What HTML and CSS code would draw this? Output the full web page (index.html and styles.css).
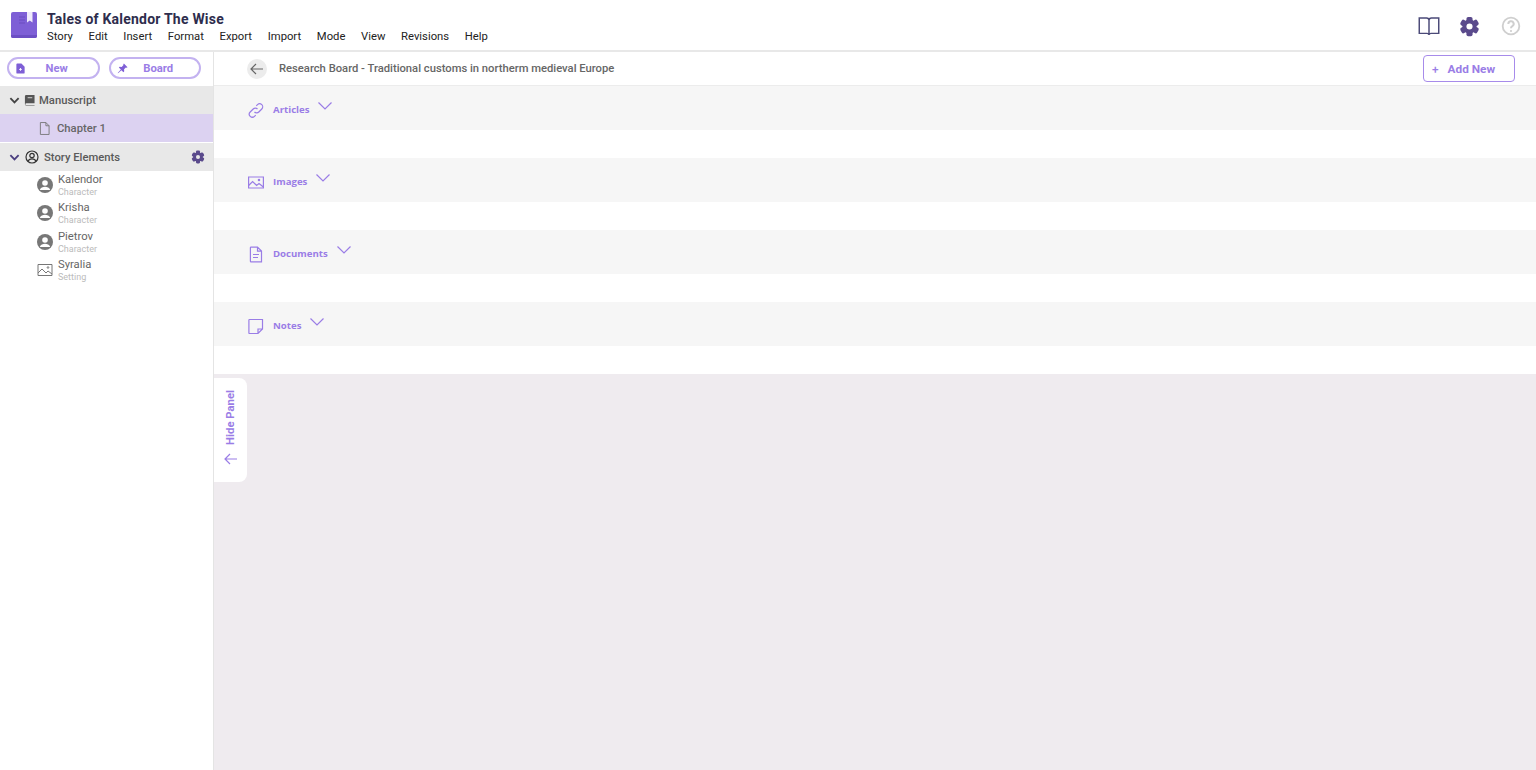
FILE: index.html
```html
<!DOCTYPE html>
<html lang="en">
<head>
<meta charset="utf-8">
<title>Tales of Kalendor The Wise</title>
<link rel="stylesheet" href="styles.css">
</head>
<body>
<header class="topbar">
  <div class="brand">
    <svg class="logo" viewBox="0 0 26 26"><path d="M2 0h22a2 2 0 0 1 2 2v22a2 2 0 0 1-2 2H2a2 2 0 0 1-2-2V2a2 2 0 0 1 2-2z" fill="#7e5fd6"/><path d="M0 23h26v1a2 2 0 0 1-2 2H2a2 2 0 0 1-2-2z" fill="#6c4fc4"/><path d="M16 0h5.500v10.500l-2.750-2-2.750 2z" fill="#efeafb"/><path d="M8 5h6M8 8h6M8 11h6" stroke="#6a4dc0" stroke-width="1"/></svg>
    <div class="brand-text">
      <div class="title">Tales of Kalendor The Wise</div>
      <nav class="menu"><span>Story</span><span>Edit</span><span>Insert</span><span>Format</span><span>Export</span><span>Import</span><span>Mode</span><span>View</span><span>Revisions</span><span>Help</span></nav>
    </div>
  </div>
  <div class="top-actions">
    <svg class="ico-book" viewBox="1 2.500 22 19.500" fill="none" stroke="#4b4a78" stroke-width="1.500"><path d="M2 3.500h7.500c1.400 0 2.500 1 2.500 2.400V21c0-1-1-1.700-2.200-1.700H2zM22 3.500h-7.500C13.100 3.500 12 4.500 12 5.900V21c0-1 1-1.700 2.200-1.700H22z"/></svg>
    <svg class="ico-gear" viewBox="0 0 24 24" fill="#5a4a8c"><circle cx="12" cy="12" r="8"/><rect x="8.500" y="1" width="7" height="22" rx="2"/><rect x="8.500" y="1" width="7" height="22" rx="2" transform="rotate(60 12 12)"/><rect x="8.500" y="1" width="7" height="22" rx="2" transform="rotate(120 12 12)"/><circle cx="12" cy="12" r="3.500" fill="#fff"/></svg>
    <svg class="ico-help" viewBox="0 0 24 24" fill="none" stroke="#cfcfcf" stroke-width="2.200"><circle cx="12" cy="12" r="10"/><path d="M8.800 9.500a3.200 3.200 0 1 1 4.800 2.700c-1 .6-1.600 1.200-1.600 2.500" stroke-width="2.400"/><circle cx="12" cy="18" r=".6" stroke-width="1.400"/></svg>
  </div>
</header>
<div class="shell">
  <aside class="sidebar">
    <div class="side-actions">
      <button class="pill"><svg class="pill-ico" viewBox="0 0 12 12"><path fill="#7e5fd6" d="M2.500 .5h4.500l3.500 3.500v6.500a1 1 0 0 1-1 1h-7a1 1 0 0 1-1-1v-9a1 1 0 0 1 1-1z"/><path stroke="#fff" stroke-width="1" d="M6 5.500v3M4.500 7h3"/></svg><span>New</span></button>
      <button class="pill"><svg class="pill-ico" viewBox="0 0 12 12"><path fill="#7e5fd6" d="M7.500 .5l4 4-1 .7-.8-.3-2 2 .2 2.200-.9.9-2.200-2.200L1.500 11 .8 11.200 1 10.500l3.200-3.300-2.200-2.200.9-.9 2.200.2 2-2-.3-.8z"/></svg><span>Board</span></button>
    </div>
    <div class="tree-head head-manuscript">
      <svg class="chev" viewBox="0 0 12 12" fill="none" stroke="#444" stroke-width="2"><path d="M1.500 3.500L6 8l4.500-4.500"/></svg>
      <svg class="book" viewBox="0 0 12 12"><path fill="#555" d="M2.500 .5h9v9h-9a.9.9 0 0 0 0 2h9v.5h-9A1.500 1.500 0 0 1 1 10.500V2a1.500 1.500 0 0 1 1.500-1.500z"/><path stroke="#ddd" stroke-width="1" d="M4 3.500h5"/></svg>
      <span>Manuscript</span>
    </div>
    <div class="chapter">
      <svg class="page" viewBox="0 0 12 14" fill="none" stroke="#777" stroke-width="1"><path d="M1.500 .5h6l3.500 3.500v9.500h-9.500zM7.500 .5V4H11"/></svg>
      <span>Chapter 1</span>
    </div>
    <div class="tree-head head-elements">
      <svg class="chev" viewBox="0 0 12 12" fill="none" stroke="#4b3f80" stroke-width="2"><path d="M1.500 3.500L6 8l4.500-4.500"/></svg>
      <svg class="user-ring" viewBox="0 0 14 14" fill="none" stroke="#333" stroke-width="1.200"><circle cx="7" cy="7" r="6"/><circle cx="7" cy="5.500" r="2.200"/><path d="M3 11.500c.6-2 2.200-2.700 4-2.700s3.400.7 4 2.700"/></svg>
      <span class="grow">Story Elements</span>
      <svg class="gear-small" viewBox="0 0 24 24" fill="#5a4a8c"><circle cx="12" cy="12" r="8"/><rect x="8.500" y="1" width="7" height="22" rx="2"/><rect x="8.500" y="1" width="7" height="22" rx="2" transform="rotate(60 12 12)"/><rect x="8.500" y="1" width="7" height="22" rx="2" transform="rotate(120 12 12)"/><circle cx="12" cy="12" r="3.500" fill="#e8e8e8"/></svg>
    </div>
    <ul class="elements">
      <li class="element"><svg class="avatar" viewBox="0 0 16 16"><circle cx="8" cy="8" r="8" fill="#777"/><circle cx="8" cy="6" r="2.800" fill="#fff"/><path d="M3 12.500c.7-2 2.700-2.800 5-2.800s4.300.8 5 2.800v.5H3z" fill="#fff"/></svg><div><div class="el-name">Kalendor</div><div class="el-type">Character</div></div></li>
      <li class="element"><svg class="avatar" viewBox="0 0 16 16"><circle cx="8" cy="8" r="8" fill="#777"/><circle cx="8" cy="6" r="2.800" fill="#fff"/><path d="M3 12.500c.7-2 2.700-2.800 5-2.800s4.300.8 5 2.800v.5H3z" fill="#fff"/></svg><div><div class="el-name">Krisha</div><div class="el-type">Character</div></div></li>
      <li class="element"><svg class="avatar" viewBox="0 0 16 16"><circle cx="8" cy="8" r="8" fill="#777"/><circle cx="8" cy="6" r="2.800" fill="#fff"/><path d="M3 12.500c.7-2 2.700-2.800 5-2.800s4.300.8 5 2.800v.5H3z" fill="#fff"/></svg><div><div class="el-name">Pietrov</div><div class="el-type">Character</div></div></li>
      <li class="element"><svg class="avatar" viewBox="0 0 16 16" fill="none" stroke="#777" stroke-width="1"><path d="M1 2.500h14v11H1z"/><path d="M1 11l4-4 4 4 2-2 4 3"/><circle cx="11" cy="5.500" r=".8"/></svg><div><div class="el-name">Syralia</div><div class="el-type">Setting</div></div></li>
    </ul>
  </aside>
  <main class="board">
    <div class="board-head">
      <button class="back"><svg viewBox="0 0 14 12" fill="none" stroke="#666" stroke-width="1.200"><path d="M13 6H1M6 1L1 6l5 5"/></svg></button>
      <h1>Research Board - Traditional customs in northerm medieval Europe</h1>
      <button class="add"><span class="plus">+</span><span>Add New</span></button>
    </div>
    <section class="group">
      <div class="group-bar">
        <svg class="g-ico" viewBox="0 0 16 16" fill="none" stroke="#9a7de6" stroke-width="1.200"><path d="M6.500 9.500a3 3 0 0 0 4.300 0l3-3a3 3 0 0 0-4.300-4.300l-1.200 1.200"/><path d="M9.500 6.500a3 3 0 0 0-4.300 0l-3 3a3 3 0 0 0 4.300 4.300l1.200-1.200"/></svg>
        <span class="g-label">Articles</span>
        <svg class="g-chev" viewBox="0 0 14 8" fill="none" stroke="#9a7de6" stroke-width="1.200"><path d="M.5.500L7 7 13.500.5"/></svg>
      </div>
      <div class="group-body"></div>
    </section>
    <section class="group">
      <div class="group-bar">
        <svg class="g-ico" viewBox="0 0 16 16" fill="none" stroke="#9a7de6" stroke-width="1.200"><path d="M.6 2.500h14.800v11H.6z"/><path d="M.6 11l4-4 4 4 2.400-2 4.400 3.500"/><circle cx="11" cy="5.500" r=".7"/></svg>
        <span class="g-label">Images</span>
        <svg class="g-chev" viewBox="0 0 14 8" fill="none" stroke="#9a7de6" stroke-width="1.200"><path d="M.5.500L7 7 13.500.5"/></svg>
      </div>
      <div class="group-body"></div>
    </section>
    <section class="group">
      <div class="group-bar">
        <svg class="g-ico" viewBox="0 0 16 16" fill="none" stroke="#9a7de6" stroke-width="1.200"><path d="M3 .6h6.500l4 4v10.800H3a.6.6 0 0 1-.6-.6V1.200A.6.6 0 0 1 3 .6zM9.500.6v4h4M5 8h6M5 11h5"/></svg>
        <span class="g-label">Documents</span>
        <svg class="g-chev" viewBox="0 0 14 8" fill="none" stroke="#9a7de6" stroke-width="1.200"><path d="M.5.500L7 7 13.500.5"/></svg>
      </div>
      <div class="group-body"></div>
    </section>
    <section class="group">
      <div class="group-bar">
        <svg class="g-ico" viewBox="0 0 16 16" fill="none" stroke="#9a7de6" stroke-width="1.200"><path d="M1.500 1h13v9.500L10 15H1.500a.6.6 0 0 1-.6-.6V1.600A.6.600 0 0 1 1.500 1zM14.500 10.500H10V15"/></svg>
        <span class="g-label">Notes</span>
        <svg class="g-chev" viewBox="0 0 14 8" fill="none" stroke="#9a7de6" stroke-width="1.200"><path d="M.5.500L7 7 13.500.5"/></svg>
      </div>
      <div class="group-body"></div>
    </section>
    <div class="canvas">
      <button class="hide-tab">
        <span class="hide-label">Hide Panel</span>
        <svg class="hide-arrow" viewBox="0 0 14 12" fill="none" stroke="#9a7de6" stroke-width="1.200"><path d="M13 6H1M6 1L1 6l5 5"/></svg>
      </button>
    </div>
  </main>
</div>
</body>
</html>
```
FILE: styles.css
```css
* { box-sizing: border-box; }
html, body { height: 100%; }
body {
  margin: 0;
  background: #fff;
  font-family: Roboto, "Liberation Sans", sans-serif;
  color: #555;
  overflow: hidden;
  display: flex;
  flex-direction: column;
}
button { font-family: inherit; cursor: pointer; }
svg { display: block; flex: none; }

.topbar {
  height: 52px;
  flex: none;
  display: flex;
  justify-content: space-between;
  border-bottom: 2px solid #e8e8e8;
  padding: 0 14px 0 11px;
}
.brand { display: flex; gap: 10px; padding-top: 11px; }
.logo { width: 26px; height: 26px; margin-top: 1px; }
.title { font-size: 14px; font-weight: 700; color: #2e2d4d; line-height: 16px; letter-spacing: .22px; }
.menu { display: flex; gap: 15.700px; font-size: 11.250px; color: #222; margin-top: 2px; line-height: 16px; }
.top-actions { display: flex; align-items: flex-start; padding-top: 17px; }
.ico-book { width: 22px; height: 19px; margin-right: 19px; }
.ico-gear { width: 21px; height: 21px; margin-right: 21px; margin-top: -1px; }
.ico-help { width: 20px; height: 20px; margin-top: -1px; margin-right: 1px; }

.shell { flex: 1; display: flex; min-height: 0; }
.sidebar { width: 214px; flex: none; border-right: 1px solid #e4e4e4; background: #fff; }
.side-actions { display: flex; gap: 9px; padding: 5px 12px 0 7px; height: 34px; }
.pill {
  flex: 1;
  height: 22px;
  border: 2px solid #c3b2f0;
  border-radius: 11px;
  background: #fff;
  color: #9a7de6;
  font-size: 11.250px;
  font-weight: 700;
  display: flex;
  align-items: center;
  padding: 0 6px;
}
.pill span { flex: 1; text-align: center; padding-right: 4px; }
.pill-ico { width: 11px; height: 11px; }
.tree-head {
  height: 28px;
  background: #e8e8e8;
  display: flex;
  align-items: center;
  font-size: 11.250px;
  font-weight: 500;
  color: #5a5a5a;
  padding-left: 9px;
}
.head-elements { margin-top: 1px; padding-right: 8px; }
.chev { width: 11px; height: 11px; margin-right: 4px; }
.book { width: 11px; height: 12px; margin-right: 4px; }
.user-ring { width: 14px; height: 14px; margin: 0 5px 0 1px; }
.grow { flex: 1; }
.gear-small { width: 14px; height: 14px; }
.chapter {
  height: 28px;
  background: #dcd2f1;
  display: flex;
  align-items: center;
  gap: 7px;
  padding-left: 39px;
  font-size: 11.250px;
  font-weight: 500;
  color: #666;
}
.page { width: 11px; height: 13px; }
.elements { list-style: none; margin: 0; padding: 0 0 0 37px; }
.element { height: 28.500px; display: flex; align-items: center; gap: 5px; }
.avatar { width: 16px; height: 16px; margin-bottom: 1px; }
.el-name { font-size: 11.250px; color: #666; line-height: 13px; }
.el-type { font-size: 9px; color: #bbb; line-height: 12px; }

.board { flex: 1; min-width: 0; display: flex; flex-direction: column; background: #fff; }
.board-head {
  height: 34px;
  flex: none;
  display: flex;
  align-items: center;
  padding: 0 21px 0 33px;
  border-bottom: 1px solid #ececec;
}
.back {
  width: 20px;
  height: 20px;
  border-radius: 50%;
  border: 0;
  padding: 3px;
  background: #ececec;
  display: flex;
  align-items: center;
  justify-content: center;
}
.back svg { width: 14px; height: 12px; }
h1 { flex: 1; margin: 0 0 0 12px; font-size: 11.230px; font-weight: 500; color: #666; }
.add {
  width: 92px;
  height: 27px;
  border: 1px solid #a78bea;
  border-radius: 4px;
  background: #fff;
  color: #9a7de6;
  font-size: 11.800px;
  font-weight: 700;
  display: flex;
  align-items: center;
  padding: 0 0 0 8px;
  gap: 9px;
}
.plus { font-weight: 500; }
.group { flex: none; }
.group-bar {
  height: 44px;
  background: #f6f6f6;
  display: flex;
  align-items: flex-start;
  padding-left: 34px;
}
.group-body { height: 28px; background: #fff; }
.g-ico { width: 16px; height: 17px; margin-top: 16px; }
.g-label {
  font-family: "Open Sans", "Noto Sans", sans-serif;
  font-size: 9.650px;
  font-weight: 700;
  color: #9a7de6;
  margin: 17px 0 0 9px;
  line-height: 14px;
}
.g-chev { width: 14px; height: 8px; margin: 16px 0 0 9px; }
.canvas { flex: 1; background: #efebef; padding-top: 4px; }
.hide-tab {
  width: 33px;
  height: 104px;
  background: #fff;
  border: 0;
  border-radius: 0 8px 8px 0;
  color: #9a7de6;
  display: flex;
  flex-direction: column;
  align-items: center;
  padding: 12px 0 0;
  gap: 8px;
}
.hide-label {
  writing-mode: vertical-rl;
  transform: rotate(180deg);
  font-size: 11.300px;
  font-weight: 700;
}
.hide-arrow { width: 14px; height: 12px; }
```
